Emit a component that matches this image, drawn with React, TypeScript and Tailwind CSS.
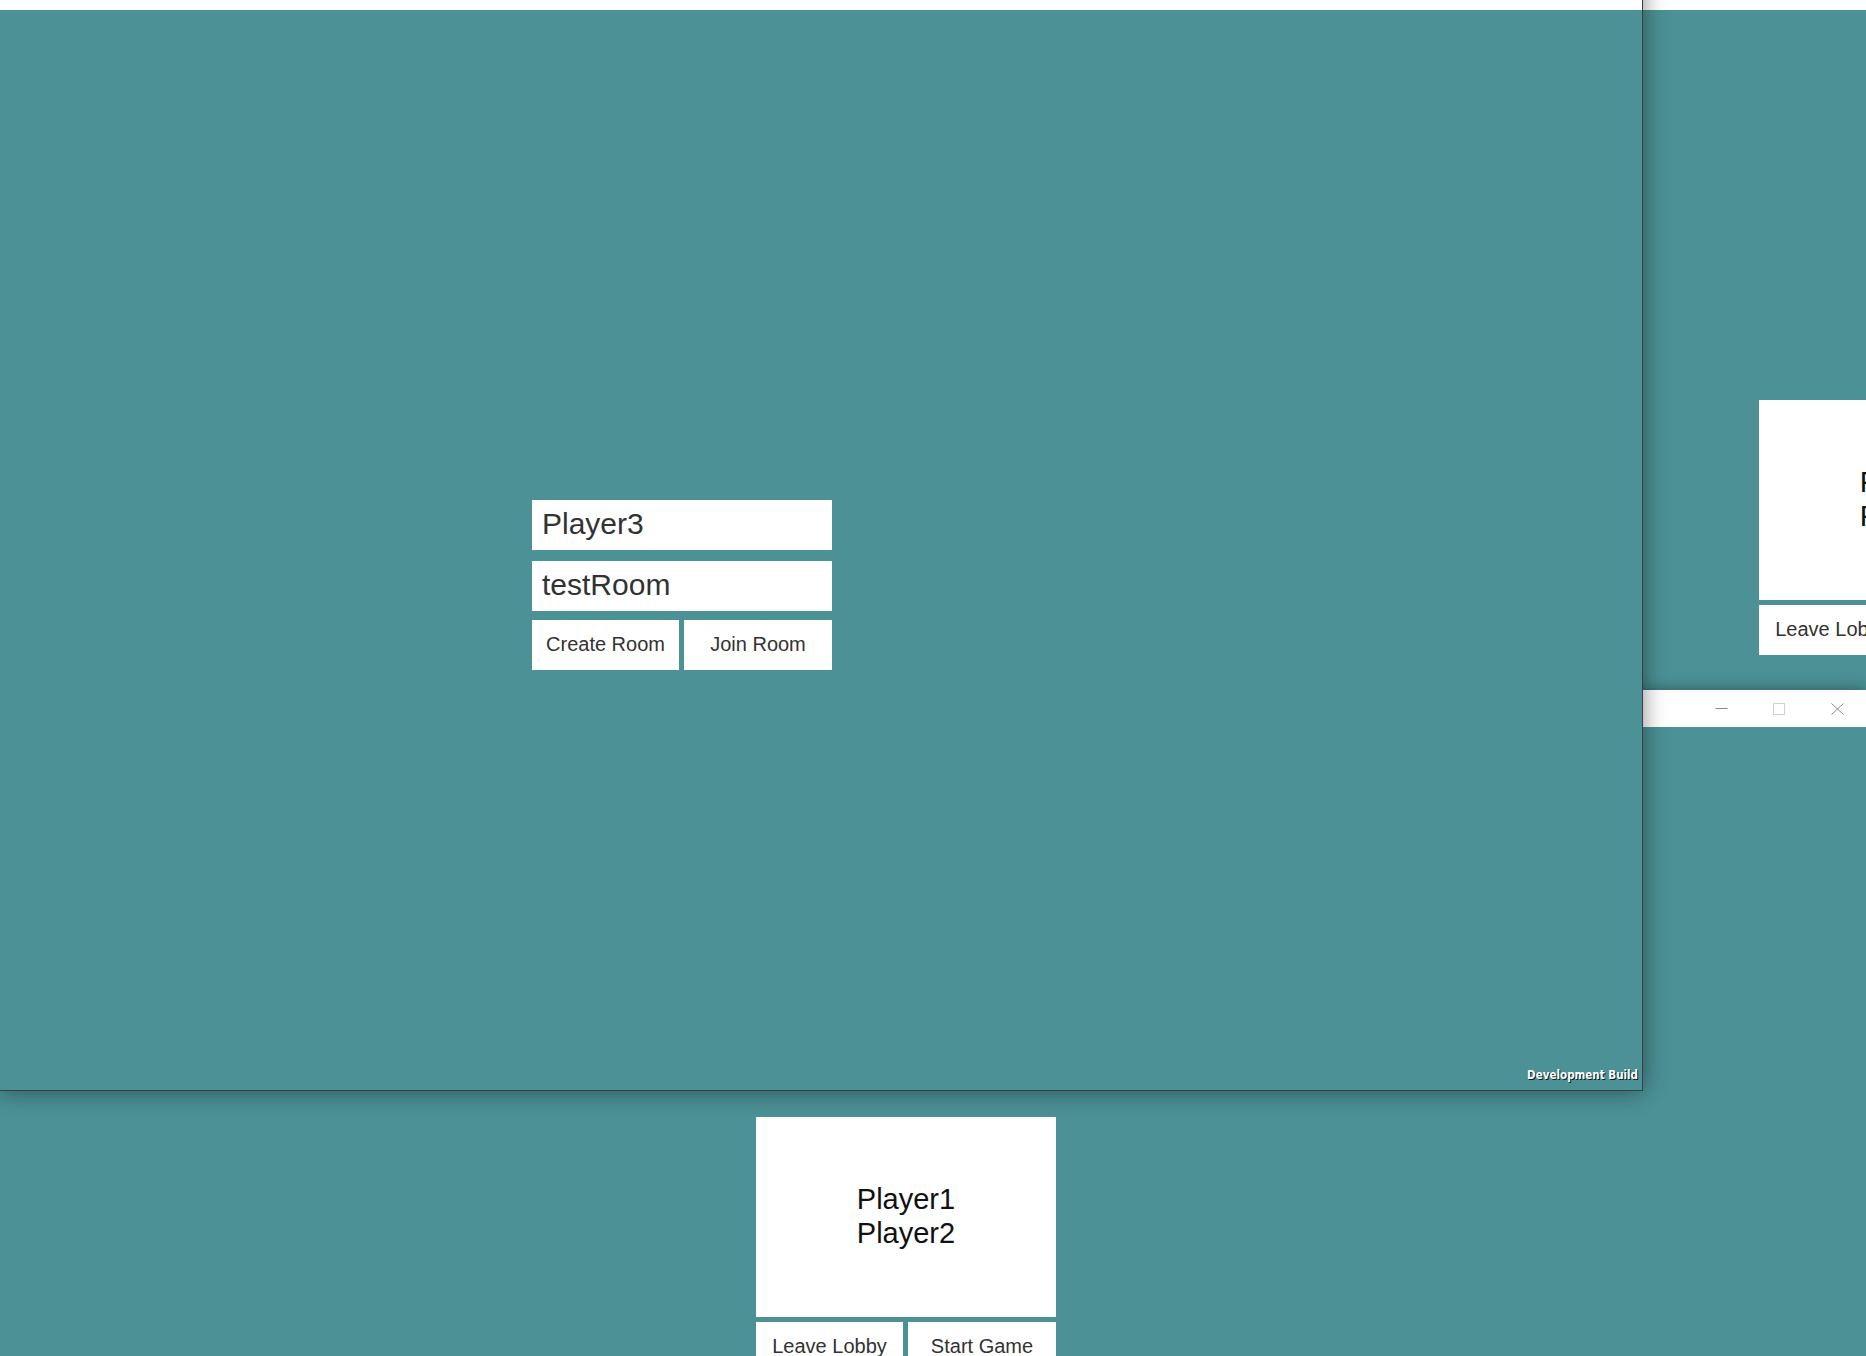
import React from "react";

const TEAL = "bg-[#4b9195]";

function LobbyPanel() {
  return (
    <div className="flex w-[300px] flex-col gap-[5px]">
      <div className="flex h-[200px] items-center justify-center bg-white">
        <div className="pb-[2px] text-center font-['Liberation_Sans',Arial,sans-serif] text-[29px] leading-[34px] text-[#111]">
          <div>Player1</div>
          <div>Player2</div>
        </div>
      </div>
      <div className="flex gap-[5px]">
        <div className="flex h-[50px] w-[147px] items-center justify-center bg-white pb-[2px] font-['Liberation_Sans',Arial,sans-serif] text-[20px] text-[#323232]">
          Leave Lobby
        </div>
        <div className="flex h-[50px] w-[148px] items-center justify-center bg-white pb-[2px] font-['Liberation_Sans',Arial,sans-serif] text-[20px] text-[#323232]">
          Start Game
        </div>
      </div>
    </div>
  );
}

function TitleControls() {
  return (
    <div className="flex h-full">
      <div className="flex h-full w-[58px] items-center justify-center">
        <svg width="13" height="13" viewBox="0 0 13 13">
          <line x1="0.5" y1="6.5" x2="12.5" y2="6.5" stroke="#8a8a8a" strokeWidth="1" />
        </svg>
      </div>
      <div className="flex h-full w-[58px] items-center justify-center">
        <svg width="12" height="12" viewBox="0 0 12 12">
          <rect x="0.5" y="0.5" width="11" height="11" fill="none" stroke="#d0d0d0" strokeWidth="1" />
        </svg>
      </div>
      <div className="flex h-full w-[58px] items-center justify-center">
        <svg width="13" height="12" viewBox="0 0 13 12">
          <line x1="0.5" y1="0.5" x2="12.5" y2="11.5" stroke="#8a8a8a" strokeWidth="1" />
          <line x1="12.5" y1="0.5" x2="0.5" y2="11.5" stroke="#8a8a8a" strokeWidth="1" />
        </svg>
      </div>
    </div>
  );
}

export default function App() {
  return (
    <div className={`relative h-[1356px] w-[1866px] overflow-hidden ${TEAL}`}>
      {/* Right window (lowest) */}
      <div className="absolute left-[1642px] top-[-27px] flex w-[1920px] flex-col">
        <div className="h-[37px] bg-white" />
        <div className={`h-[1080px] ${TEAL} pl-[117px] pt-[390px]`}>
          <LobbyPanel />
        </div>
      </div>

      {/* Bottom window (middle) */}
      <div className="absolute left-[-54px] top-[690px] flex w-[1920px] flex-col shadow-[0_0_14px_rgba(0,0,0,0.4)]">
        <div className="flex h-[37px] justify-end bg-white">
          <TitleControls />
        </div>
        <div className={`h-[1043px] ${TEAL} pl-[810px] pt-[390px]`}>
          <LobbyPanel />
        </div>
      </div>

      {/* Main window (top) */}
      <div className="absolute left-0 top-[-27px] flex w-[1643px] flex-col border-b border-r border-[#3a3f40] shadow-[0_0_22px_rgba(0,0,0,0.45)]">
        <div className="h-[37px] bg-white" />
        <div className={`relative flex h-[1080px] flex-col ${TEAL}`}>
          <div className="flex flex-1 flex-col pl-[532px] pt-[490px]">
            <div className="flex w-[300px] flex-col gap-[11px]">
              <div className="flex h-[50px] items-center bg-white pb-[4px] pl-[10px] font-['Liberation_Sans',Arial,sans-serif] text-[30px] text-[#323232]">
                Player3
              </div>
              <div className="flex h-[50px] items-center bg-white pb-[4px] pl-[10px] font-['Liberation_Sans',Arial,sans-serif] text-[30px] text-[#323232]">
                testRoom
              </div>
            </div>
            <div className="mt-[9px] flex w-[300px] gap-[5px]">
              <div className="flex h-[50px] w-[147px] items-center justify-center bg-white pb-[2px] font-['Liberation_Sans',Arial,sans-serif] text-[20px] text-[#323232]">
                Create Room
              </div>
              <div className="flex h-[50px] w-[148px] items-center justify-center bg-white pb-[2px] font-['Liberation_Sans',Arial,sans-serif] text-[20px] text-[#323232]">
                Join Room
              </div>
            </div>
          </div>
          <div className="flex justify-end pb-[9px] pr-[4px]">
            <span className="font-['DejaVu_Sans_Condensed','DejaVu_Sans',sans-serif] text-[11.5px] font-bold leading-none text-white [text-shadow:1px_1px_0_rgba(0,0,0,0.85)]">
              Development Build
            </span>
          </div>
        </div>
      </div>
    </div>
  );
}
